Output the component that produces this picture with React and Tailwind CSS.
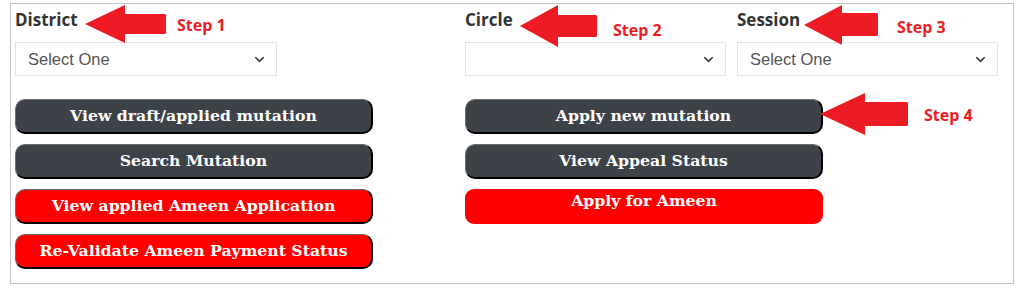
import { ChevronDown } from 'lucide-react';

const dark = 'bg-[#3d4249]';
const red = 'bg-[#ff0000]';

function Arrow({ x, y, w, h, headW, shaftTop, shaftBottom }) {
  // red left-pointing arrow used as annotation
  return (
    <svg className="absolute" style={{ left: x, top: y }} width={w} height={h} viewBox={`0 0 ${w} ${h}`}>
      <polygon
        fill="#ed1c24"
        points={`0,${h / 2} ${headW},0 ${headW},${shaftTop} ${w - 1},${shaftTop} ${w},${shaftTop + 1} ${w},${shaftBottom - 1} ${w - 1},${shaftBottom} ${headW},${shaftBottom} ${headW},${h}`}
      />
    </svg>
  );
}

function Step({ x, y, children }) {
  return (
    <span className="absolute text-[16px] font-bold leading-[20px] text-[#ed1c24]" style={{ left: x, top: y, fontFamily: '"Open Sans", sans-serif' }}>
      {children}
    </span>
  );
}

function Field({ label, value, width }) {
  return (
    <div className={width}>
      <div className="text-[17px] font-bold leading-[22px] text-[#333]" style={{ fontFamily: '"Open Sans", sans-serif' }}>{label}</div>
      <div className="mt-[11px] flex h-[34px] items-center justify-between border border-[#e3e3e3] bg-white pl-[12px] pr-[9px]">
        <span className="text-[16.5px] text-[#555]" style={{ fontFamily: '"Liberation Sans", Arial, sans-serif' }}>{value}</span>
        <ChevronDown size={15} strokeWidth={2.6} className="text-[#444]" />
      </div>
    </div>
  );
}

function Btn({ children, color }) {
  return (
    <button
      className={`flex h-[35px] w-full items-center justify-center rounded-[10px] border border-[#6b6b6b] border-b-2 border-r-2 border-b-black border-r-black ${color} text-[15.7px] font-bold text-white`}
      style={{ fontFamily: '"DejaVu Serif", "Liberation Serif", serif' }}
    >
      {children}
    </button>
  );
}

export default function App() {
  return (
    <div className="relative h-[292px] w-[1024px] bg-white pl-[10px] pt-[3px]">
      <div className="h-[281px] w-[1004px] border border-[#c4c4c4] px-[4px] pt-[5px]">
        <div className="flex">
          <Field label="District" value="Select One" width="w-[262px]" />
          <div className="ml-[188px] flex gap-[11px]">
            <Field label="Circle" value="" width="w-[261px]" />
            <Field label="Session" value="Select One" width="w-[261px]" />
          </div>
        </div>

        <div className="mt-[23px] flex">
          <div className="flex w-[358px] flex-col gap-[10px]">
            <Btn color={dark}>View draft/applied mutation</Btn>
            <Btn color={dark}>Search Mutation</Btn>
            <Btn color={red}>View applied Ameen Application</Btn>
            <Btn color={red}>Re-Validate Ameen Payment Status</Btn>
          </div>
          <div className="ml-[92px] flex w-[358px] flex-col gap-[10px]">
            <Btn color={dark}>Apply new mutation</Btn>
            <Btn color={dark}>View Appeal Status</Btn>
            <button
              className={`h-[35px] w-full rounded-[9px] ${red} pb-[12px] text-[15.7px] font-bold text-white`}
              style={{ fontFamily: '"DejaVu Serif", "Liberation Serif", serif' }}
            >
              Apply for Ameen
            </button>
          </div>
        </div>
      </div>

      <Arrow x={85} y={5} w={81} h={38} headW={40} shaftTop={9} shaftBottom={29} />
      <Step x={177} y={15}>Step 1</Step>
      <Arrow x={520} y={5} w={77} h={42} headW={38} shaftTop={10} shaftBottom={32} />
      <Step x={613} y={20}>Step 2</Step>
      <Arrow x={804} y={5} w={74} h={40} headW={38} shaftTop={8} shaftBottom={31} />
      <Step x={897} y={17}>Step 3</Step>
      <Arrow x={820} y={93} w={88} h={42} headW={45} shaftTop={9} shaftBottom={33} />
      <Step x={924} y={105}>Step 4</Step>
    </div>
  );
}
